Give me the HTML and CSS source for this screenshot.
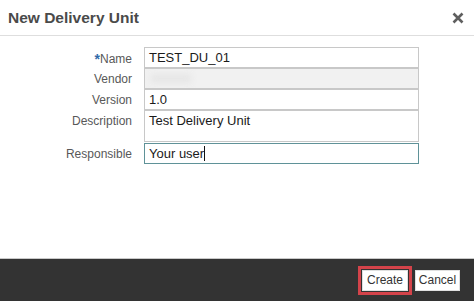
FILE: index.html
```html
<!DOCTYPE html>
<html>
<head>
<meta charset="utf-8">
<link rel="stylesheet" href="styles.css">
</head>
<body>
<div class="dialog">
  <header class="header">
    <h1 class="title">New Delivery Unit</h1>
    <span class="close" aria-label="Close">
      <svg width="12" height="12" viewBox="0 0 12 12"><path d="M1.5 1.5 L10.5 10.5 M10.5 1.5 L1.5 10.5" stroke="#5f5f5f" stroke-width="2.6" stroke-linecap="butt"/></svg>
    </span>
  </header>
  <main class="body">
    <div class="form">
      <label class="label"><span class="req">*</span>Name</label>
      <div class="field">TEST_DU_01</div>
      <label class="label">Vendor</label>
      <div class="field field-ro"><span class="blur"></span></div>
      <label class="label">Version</label>
      <div class="field">1.0</div>
      <label class="label label-top">Description</label>
      <div class="field field-area">Test Delivery Unit</div>
      <label class="label label-resp">Responsible</label>
      <div class="field field-focus field-resp">Your user<span class="caret"></span></div>
    </div>
  </main>
  <footer class="footer">
    <button class="btn btn-create btn-marked">Create</button>
    <button class="btn btn-cancel">Cancel</button>
  </footer>
</div>
</body>
</html>
```
FILE: styles.css
```css
html, body {
  margin: 0;
  padding: 0;
  background: #fff;
}
body {
  font-family: "Liberation Sans", Arial, sans-serif;
  width: 474px;
  height: 301px;
  overflow: hidden;
}
.dialog {
  display: flex;
  flex-direction: column;
  height: 301px;
}
.header {
  display: flex;
  align-items: center;
  justify-content: space-between;
  padding: 0 10px 0 8px;
  box-sizing: border-box;
  height: 36px;
  border-bottom: 1px solid #dedede;
}
.title {
  margin: 0;
  font-size: 15.5px;
  font-weight: bold;
  color: #4a4a4a;
}
.close {
  display: flex;
  width: 12px;
  height: 12px;
}
.body {
  flex: 1;
  padding-top: 11px;
}
.form {
  display: grid;
  grid-template-columns: 132px 275px;
  column-gap: 12px;
  align-items: center;
}
.label {
  text-align: right;
  font-size: 12px;
  color: #585858;
}
.req {
  color: #2f6aa8;
  font-weight: bold;
  font-size: 14px;
  position: relative;
  top: 1px;
}
.label-top {
  align-self: start;
  padding-top: 4px;
}
.field {
  height: 21px;
  box-sizing: border-box;
  border: 1px solid #c8c8c8;
  background: #fff;
  font-size: 13px;
  color: #1a1a1a;
  padding: 2px 4px 0;
  line-height: 16px;
}
.field-ro {
  background: #f1f1f1;
  position: relative;
  overflow: hidden;
}
.blur {
  position: absolute;
  left: 6px;
  top: 5px;
  width: 40px;
  height: 9px;
  background: #e6e6e6;
  filter: blur(3px);
}
.field-area {
  height: 32px;
}
.field-focus {
  border-color: #5f9298;
}
.field-resp, .label-resp {
  margin-top: 1px;
}
.caret {
  display: inline-block;
  width: 1px;
  height: 15px;
  background: #111;
  vertical-align: -3px;
}
.footer {
  height: 43px;
  box-sizing: border-box;
  border-top: 1px solid #c9c9c9;
  background: #333;
  display: flex;
  justify-content: flex-end;
  align-items: center;
  gap: 7px;
  padding-right: 14px;
}
.btn {
  font-family: "Liberation Sans", Arial, sans-serif;
  font-size: 12px;
  color: #333;
  background: #fff;
  border: 1px solid #e0e0e0;
  border-radius: 0;
  height: 21px;
  padding: 0;
  margin: 0;
}
.btn-create {
  width: 46px;
}
.btn-cancel {
  width: 45px;
}
.btn-marked {
  outline: 3px solid #d4434a;
  outline-offset: 1px;
}
```
